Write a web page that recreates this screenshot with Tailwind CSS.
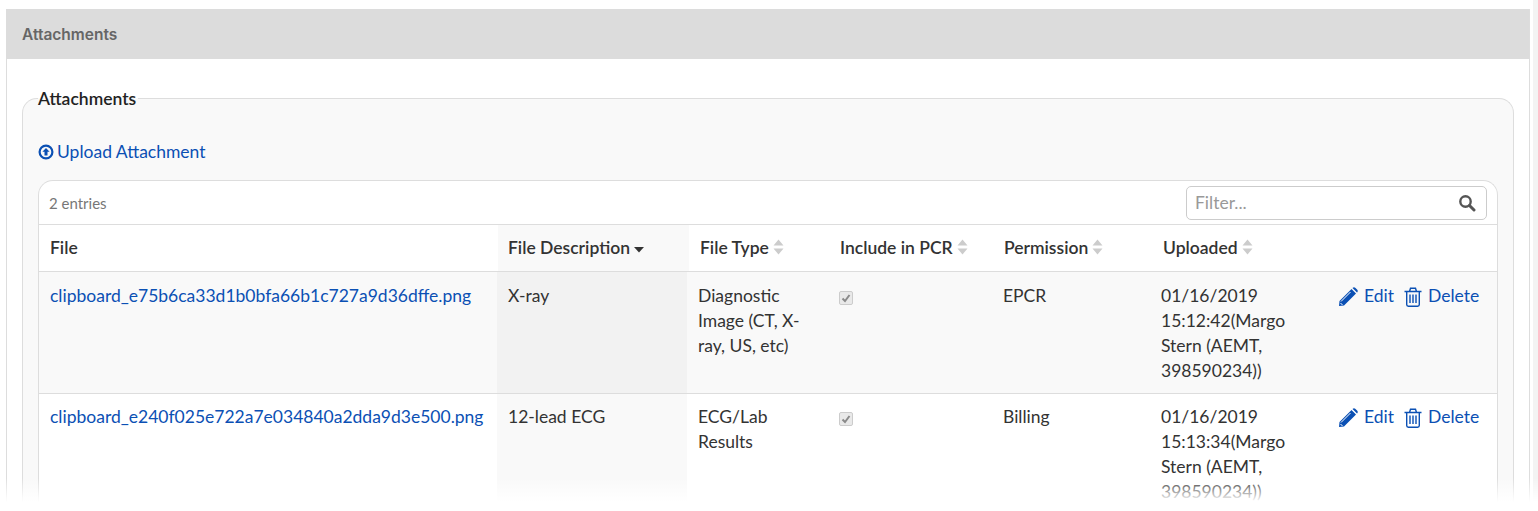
<!DOCTYPE html>
<html lang="en">
<head>
    <meta charset="UTF-8">
    <title>Attachments</title>
    <script src="https://cdn.jsdelivr.net/npm/@tailwindcss/browser@4"></script>
</head>
<body class="bg-white h-[511px] overflow-hidden relative font-['Lato',sans-serif] text-[17.5px] leading-[25px] text-[#333]">

    <!-- page scroll gutter -->
    <div class="absolute right-0 top-0 bottom-0 w-[5px] bg-[#f3f3f3]"></div>

    <div class="ml-[6px] mr-[8px] mt-[9px] border-x border-[#ddd]">
        <div class="h-[50px] -mx-px mr-0 bg-[#dcdcdc] pl-[16px] flex items-center font-['Inter',sans-serif] text-[15.5px] font-semibold text-[#666]">Attachments</div>

        <div class="pl-[15px] pr-[15px] pt-[27px]">
            <fieldset class="border border-b-0 border-[#ddd] rounded-t-[15px] bg-[#f9f9f9] pl-[15px] pr-[15px] pt-[28px]">
                <legend class="relative -left-px px-px ml-0 font-semibold text-[#222]">Attachments</legend>

                <a class="flex items-center gap-[3px] text-[#0b50b4] h-[25px]">
                    <svg width="16" height="16" viewBox="0 0 16 16" class="shrink-0">
                        <circle cx="8" cy="8" r="6.4" fill="none" stroke="#0b50b4" stroke-width="2.2"/>
                        <path d="M8 3.9 L11.6 7.8 L9.5 7.8 L9.5 11.6 L6.5 11.6 L6.5 7.8 L4.4 7.8 Z" fill="#0b50b4"/>
                    </svg>
                    Upload Attachment
                </a>

                <div class="mt-[16px] bg-white border border-b-0 border-[#ddd] rounded-t-[15px]">
                    <!-- toolbar -->
                    <div class="h-[44px] flex items-center justify-between pl-[10px] pr-[10px] border-b border-[#ddd]">
                        <span class="mt-px text-[15px] text-[#777]">2 entries</span>
                        <div class="w-[301px] h-[34px] border border-[#ccc] rounded-[5px] bg-white flex items-center justify-between pl-[8px] pr-[10px] text-[#999]">
                            Filter...
                            <svg width="18" height="18" viewBox="0 0 18 18">
                                <circle cx="7.5" cy="7.5" r="5.2" fill="none" stroke="#555" stroke-width="2.4"/>
                                <path d="M11.5 11.5 L16 16" stroke="#555" stroke-width="3" stroke-linecap="round"/>
                            </svg>
                        </div>
                    </div>

                    <!-- header -->
                    <div class="grid grid-cols-[459px_191px_140px_164px_159px_1fr] h-[47px] border-b border-[#ddd] font-semibold text-[#333] items-center">
                        <div class="pl-[11px] pb-[2px] h-full flex items-center">File</div>
                        <div class="pl-[10px] pb-[2px] h-full flex items-center gap-[4px] bg-[#f9f9f9]">File Description
                            <svg width="10" height="6" viewBox="0 0 10 6" class="mt-[6px]"><path d="M0 0 H10 L5 5.5 Z" fill="#333"/></svg>
                        </div>
                        <div class="pl-[11px] pb-[2px] h-full flex items-center gap-[4px]">File Type
                            <svg width="11" height="16" viewBox="0 0 11 16"><path d="M5.5 0.5 L10.5 6.5 H0.5 Z M0.5 9.5 H10.5 L5.5 15.5 Z" fill="#ccc"/></svg>
                        </div>
                        <div class="pl-[11px] pb-[2px] h-full flex items-center gap-[4px]">Include in PCR
                            <svg width="11" height="16" viewBox="0 0 11 16"><path d="M5.5 0.5 L10.5 6.5 H0.5 Z M0.5 9.5 H10.5 L5.5 15.5 Z" fill="#ccc"/></svg>
                        </div>
                        <div class="pl-[11px] pb-[2px] h-full flex items-center gap-[4px]">Permission
                            <svg width="11" height="16" viewBox="0 0 11 16"><path d="M5.5 0.5 L10.5 6.5 H0.5 Z M0.5 9.5 H10.5 L5.5 15.5 Z" fill="#ccc"/></svg>
                        </div>
                        <div class="pl-[11px] pb-[2px] h-full flex items-center gap-[4px]">Uploaded
                            <svg width="11" height="16" viewBox="0 0 11 16"><path d="M5.5 0.5 L10.5 6.5 H0.5 Z M0.5 9.5 H10.5 L5.5 15.5 Z" fill="#ccc"/></svg>
                        </div>
                    </div>

                    <!-- row 1 -->
                    <div class="grid grid-cols-[458px_190px_141px_164px_159px_187px_1fr] bg-[#f9f9f9] border-b border-[#ddd]">
                        <div class="pl-[11px] pt-[11px] pb-[10px]"><a class="text-[#0b50b4]">clipboard_e75b6ca33d1b0bfa66b1c727a9d36dffe.png</a></div>
                        <div class="pl-[11px] pt-[11px] bg-[#f2f2f2]">X-ray</div>
                        <div class="pl-[11px] pr-[20px] pt-[11px]">Diagnostic Image (CT, X-ray, US, etc)</div>
                        <div class="pl-[11px] pt-[11px]">
                            <span class="mt-[8px] w-[14px] h-[14px] flex items-center justify-center rounded-[2px] border border-[#ccc] bg-[#e9e9e9]">
                                <svg width="10" height="10" viewBox="0 0 10 10"><path d="M1.5 5.5 L4 8 L8.5 2" fill="none" stroke="#8a8a8a" stroke-width="2"/></svg>
                            </span>
                        </div>
                        <div class="pl-[11px] pt-[11px]">EPCR</div>
                        <div class="pl-[10px] pt-[11px] pb-[10px] pr-[40px]">01/16/2019 15:12:42(Margo Stern (AEMT, 398590234))</div>
                        <div class="pt-[11px] flex items-start gap-[10px] text-[#0b50b4]">
                            <span class="flex items-center gap-[5px]">
                                <svg width="21" height="21" viewBox="0 0 21 21" class="mt-[2px]">
                                    <path d="M1 20 L1.5 15 L13.5 3 L18 7.5 L6 19.5 Z M14.8 1.7 Q16 0.6 17.2 1.7 L19.3 3.8 Q20.4 5 19.3 6.2 L19 6.5 L14.5 2 Z" fill="#0b50b4"/>
                                    <path d="M3 15.5 L12.5 6 M2.5 17 L4.5 19" stroke="#fff" stroke-width="1"/>
                                </svg>
                                Edit
                            </span>
                            <span class="flex items-center gap-[6px]">
                                <svg width="18" height="20" viewBox="0 0 18 20" class="mt-[2px]" fill="none" stroke="#0b50b4" stroke-width="1.4">
                                    <path d="M0.5 4.5 H17.5 M5.5 4.5 L6.5 1.2 H11.5 L12.5 4.5 M2.7 4.5 V17.5 Q2.7 19.2 4.4 19.2 H13.6 Q15.3 19.2 15.3 17.5 V4.5 M6 7.5 V16 M9 7.5 V16 M12 7.5 V16"/>
                                </svg>
                                Delete
                            </span>
                        </div>
                    </div>

                    <!-- row 2, cut off by the end of the page -->
                    <div class="grid grid-cols-[458px_190px_141px_164px_159px_187px_1fr] h-[108px] overflow-hidden">
                        <div class="pl-[11px] pt-[10px]"><a class="text-[#0b50b4]">clipboard_e240f025e722a7e034840a2dda9d3e500.png</a></div>
                        <div class="pl-[11px] pt-[10px] bg-[#f9f9f9]">12-lead ECG</div>
                        <div class="pl-[11px] pr-[20px] pt-[10px]">ECG/Lab Results</div>
                        <div class="pl-[11px] pt-[10px]">
                            <span class="mt-[8px] w-[14px] h-[14px] flex items-center justify-center rounded-[2px] border border-[#ccc] bg-[#e9e9e9]">
                                <svg width="10" height="10" viewBox="0 0 10 10"><path d="M1.5 5.5 L4 8 L8.5 2" fill="none" stroke="#8a8a8a" stroke-width="2"/></svg>
                            </span>
                        </div>
                        <div class="pl-[11px] pt-[10px]">Billing</div>
                        <div class="pl-[10px] pt-[10px] pr-[40px]">01/16/2019 15:13:34(Margo Stern (AEMT, 398590234))</div>
                        <div class="pt-[10px] flex items-start gap-[10px] text-[#0b50b4]">
                            <span class="flex items-center gap-[5px]">
                                <svg width="21" height="21" viewBox="0 0 21 21" class="mt-[2px]">
                                    <path d="M1 20 L1.5 15 L13.5 3 L18 7.5 L6 19.5 Z M14.8 1.7 Q16 0.6 17.2 1.7 L19.3 3.8 Q20.4 5 19.3 6.2 L19 6.5 L14.5 2 Z" fill="#0b50b4"/>
                                    <path d="M3 15.5 L12.5 6 M2.5 17 L4.5 19" stroke="#fff" stroke-width="1"/>
                                </svg>
                                Edit
                            </span>
                            <span class="flex items-center gap-[6px]">
                                <svg width="18" height="20" viewBox="0 0 18 20" class="mt-[2px]" fill="none" stroke="#0b50b4" stroke-width="1.4">
                                    <path d="M0.5 4.5 H17.5 M5.5 4.5 L6.5 1.2 H11.5 L12.5 4.5 M2.7 4.5 V17.5 Q2.7 19.2 4.4 19.2 H13.6 Q15.3 19.2 15.3 17.5 V4.5 M6 7.5 V16 M9 7.5 V16 M12 7.5 V16"/>
                                </svg>
                                Delete
                            </span>
                        </div>
                    </div>
                </div>
            </fieldset>
        </div>
    </div>

    <!-- fade at the bottom of the page -->
    <div class="absolute left-0 right-0 top-[478px] h-[24px] bg-gradient-to-b from-white/0 to-white"></div>
    <div class="absolute left-0 right-0 top-[502px] bottom-0 bg-white"></div>
</body>
</html>
